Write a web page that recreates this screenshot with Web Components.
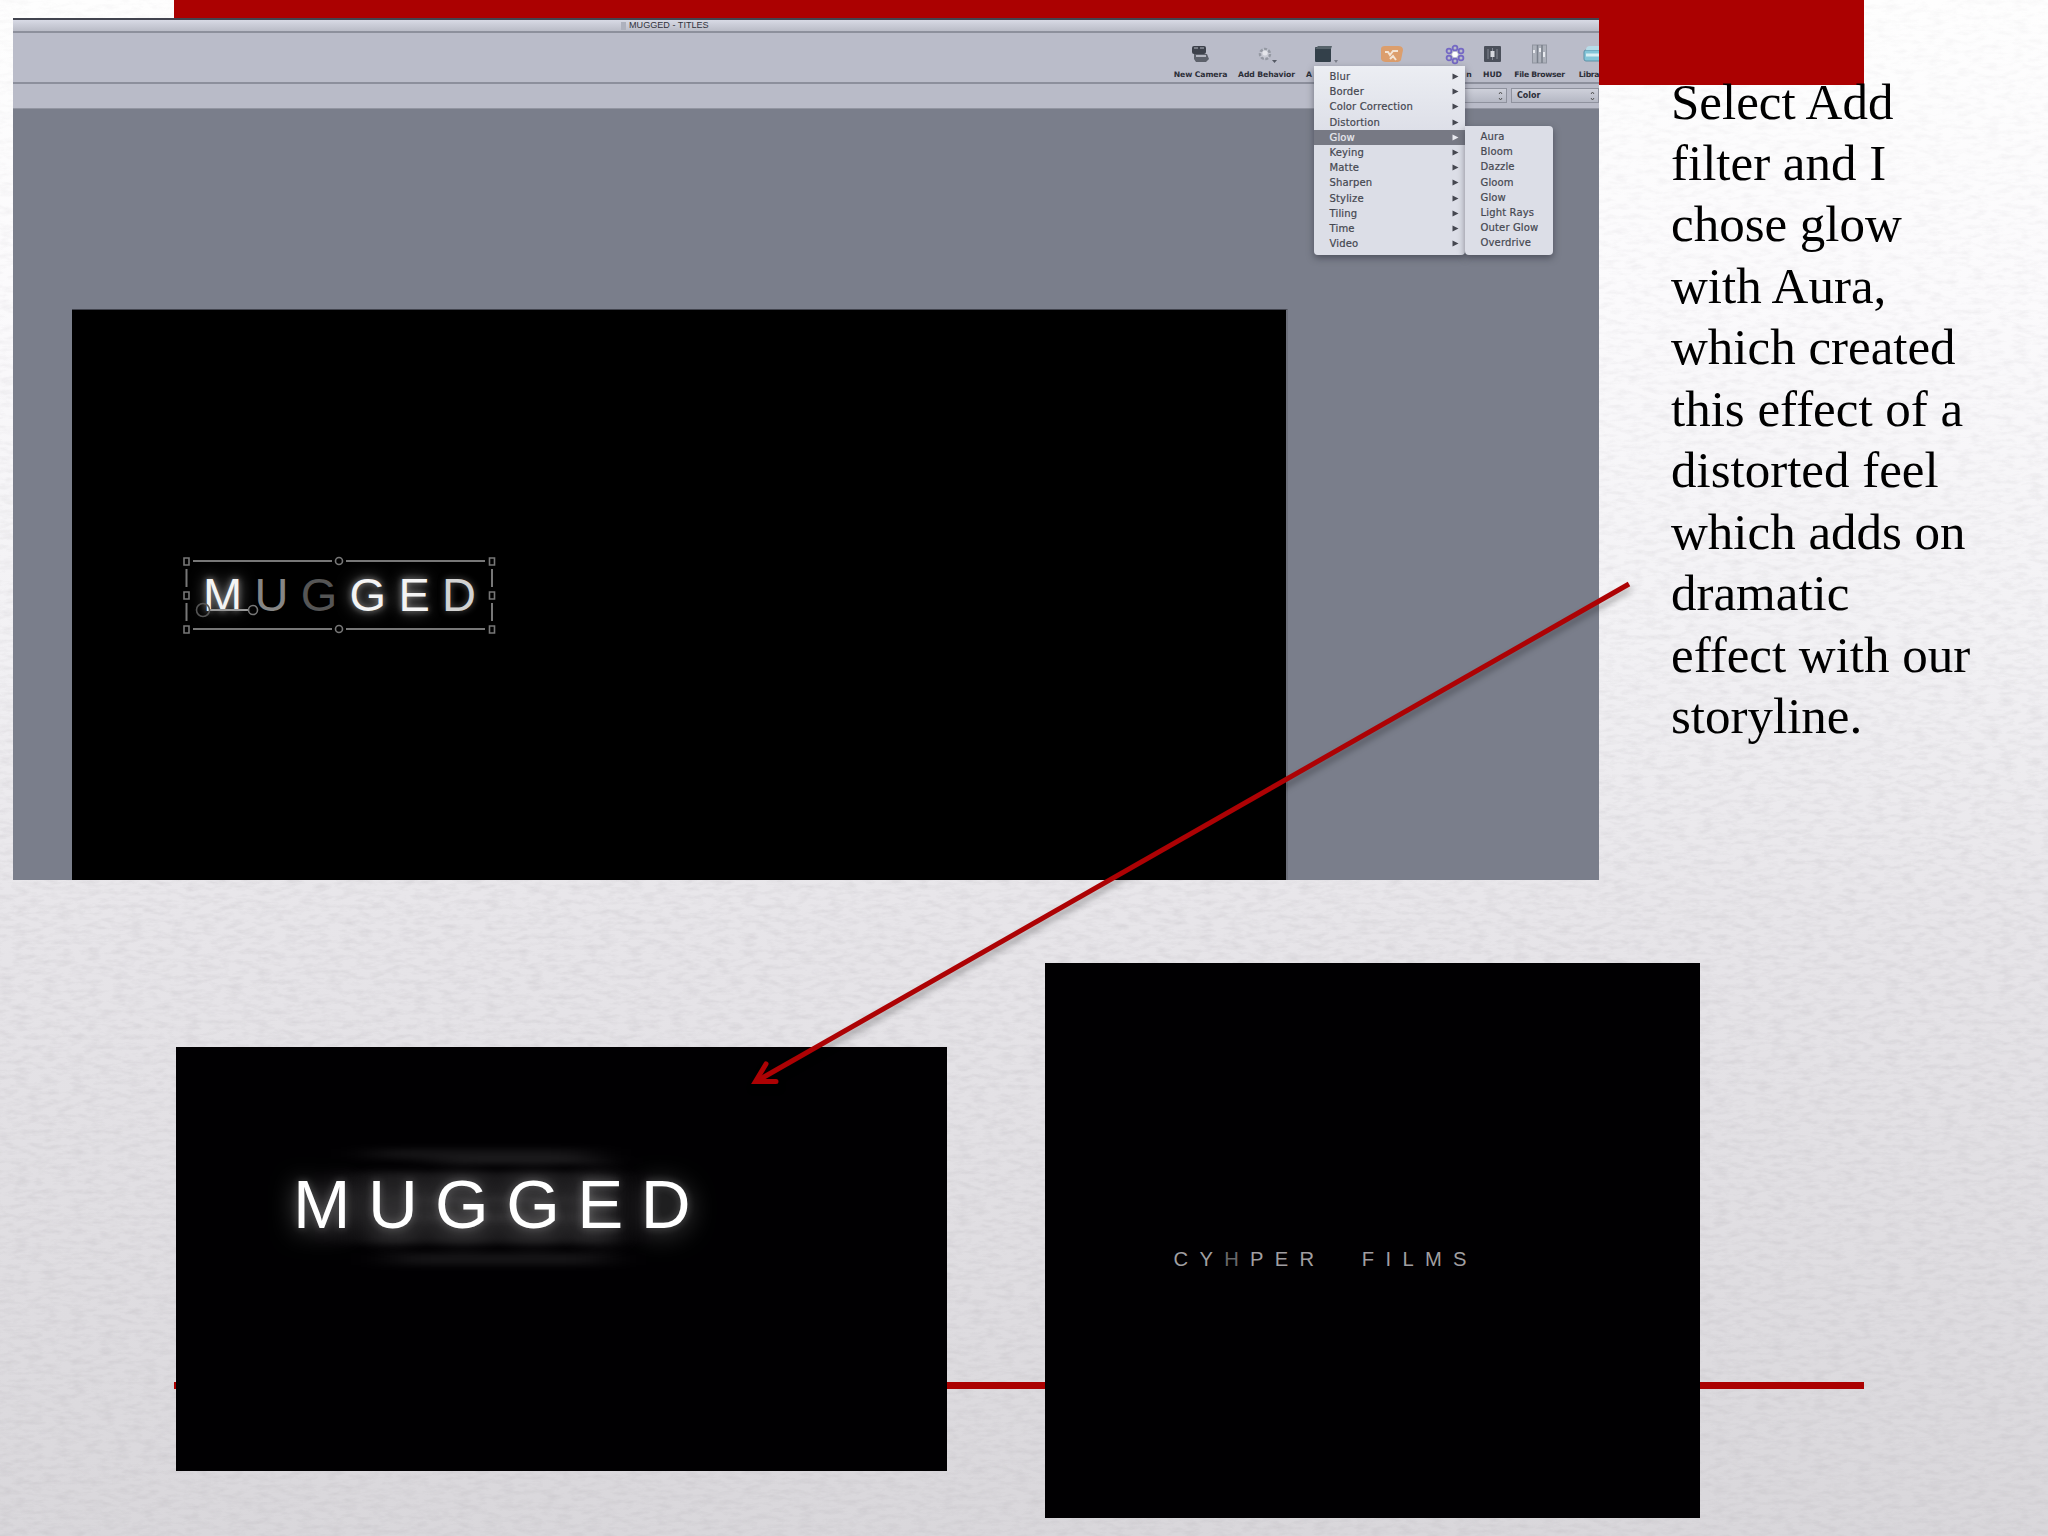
<!DOCTYPE html>
<html lang="en">
<head>
<meta charset="utf-8">
<title>MUGGED - TITLES</title>
<style>
    body {
        margin: 0;
        width: 2048px;
        height: 1536px;
        overflow: hidden;
    }
</style>
</head>
<body>
<title-slide>
    <motion-window slot="screen" heading="MUGGED - TITLES"></motion-window>
    <slide-caption slot="caption">Select Add filter and I chose glow with Aura, which created this effect of a distorted feel which adds on dramatic effect with our storyline.</slide-caption>
    <glow-still slot="stills">MUGGED</glow-still>
    <film-still slot="stills"></film-still>
    <slide-arrow slot="overlay"></slide-arrow>
</title-slide>

<script>
class TitleSlide extends HTMLElement {
    connectedCallback() {
        this.attachShadow({ mode: 'open' });
        this.shadowRoot.innerHTML = `
            <style>
                :host {
                    display: grid;
                    grid-template-columns: 1586px 303px;
                    grid-template-rows: 862px auto;
                    column-gap: 72px;
                    box-sizing: border-box;
                    position: relative;
                    width: 2048px;
                    height: 1536px;
                    padding: 18px 0 0 13px;
                    overflow: hidden;
                    background: linear-gradient(#fefefe 0, #fbfafc 300px, #f2f1f4 640px, #e7e5e9 920px, #dfdde1 1280px, #d9d7db 1536px);
                }
                .paper, .band, .rule {
                    position: absolute;
                }
                .paper {
                    inset: 0;
                    width: 100%;
                    height: 100%;
                }
                .band {
                    left: 174px;
                    top: 0;
                    width: 1690px;
                    height: 85px;
                    background: #ab0101;
                }
                .rule {
                    left: 174px;
                    top: 1382px;
                    width: 1690px;
                    height: 7px;
                    background: #ab0101;
                }
                .stills {
                    grid-column: 1 / -1;
                    display: flex;
                    align-items: flex-start;
                    gap: 98px;
                    padding: 83px 0 0 163px;
                    position: relative;
                }
            </style>
            <svg class="paper">
                <filter id="grain" x="0" y="0" width="100%" height="100%">
                    <feTurbulence type="fractalNoise" baseFrequency="0.07 0.2" numOctaves="3" seed="8"></feTurbulence>
                    <feColorMatrix values="0 0 0 0 0.42  0 0 0 0 0.4  0 0 0 0 0.43  0.9 0 0 0 -0.38"></feColorMatrix>
                </filter>
                <linearGradient id="fade" x1="0" y1="0" x2="0" y2="1">
                    <stop offset="0" stop-color="#666"></stop>
                    <stop offset="0.6" stop-color="#fff"></stop>
                </linearGradient>
                <mask id="m"><rect width="2048" height="1536" fill="url(#fade)"></rect></mask>
                <g mask="url(#m)"><rect width="2048" height="1536" filter="url(#grain)" opacity="0.5"></rect></g>
            </svg>
            <div class="band"></div>
            <div class="rule"></div>
            <slot name="screen"></slot>
            <slot name="caption"></slot>
            <div class="stills"><slot name="stills"></slot></div>
            <slot name="overlay"></slot>
        `;
    }
}
customElements.define('title-slide', TitleSlide);

class SlideCaption extends HTMLElement {
    connectedCallback() {
        this.attachShadow({ mode: 'open' });
        this.shadowRoot.innerHTML = `
            <style>
                :host {
                    display: block;
                    position: relative;
                    margin-top: 53.500px;
                    font: 51px/61.45px 'Liberation Serif', serif;
                    color: #000;
                }
            </style>
            <slot></slot>
        `;
    }
}
customElements.define('slide-caption', SlideCaption);

// The open menu covers most of two labels, so only their visible letters are set.
const TOOLS = [
    { label: 'New Camera', width: 65, icon: `
        <rect x="1" y="2" width="14" height="8" rx="2" fill="#3d414b"/>
        <path d="M3 4h4M9 4h4" stroke="#8a8e99" stroke-width="1.5"/>
        <path d="M3 10h13l2 5-3 3H5l-2-3z" fill="#5d616b"/><path d="M5 12h10" stroke="#b2b4bf" stroke-width="2"/>` },
    { label: 'Add Behavior', width: 67, icon: `
        <circle cx="8" cy="10" r="5" fill="#c9cbd4" stroke="#9599a3" stroke-width="2.5" stroke-dasharray="3 1.4"/>
        <circle cx="8" cy="9" r="2.5" fill="#e4e5ea"/><path d="M15 16h5l-2.500 3z" fill="#555964"/>` },
    { label: 'A', width: 48, shift: 'padding-right:30px', icon: `
        <rect x="1" y="3" width="16" height="15" rx="1" fill="#33404a"/>
        <path d="M1 5l3-3h14l-1 3z" fill="#57636b"/><path d="M20 16h4l-2 3z" fill="#7b7f8a"/>` },
    { label: '', width: 88, icon: `
        <path d="M-1 5q0-3 4-3h13q5 0 5 4l-2 10q-1 2-5 2H4q-4 0-5-3z" fill="#dc9e6c"/>
        <path d="M3 8h3l2 3 3-4h5M8 15l3-3 3 4" fill="none" stroke="#f3e4d4" stroke-width="2"/>` },
    { label: 'n', width: 38, shift: 'padding-left:28px', icon: `
        <g fill="none" stroke="#7468c4" stroke-width="1.800"><circle cx="10" cy="4" r="2.400"/><circle cx="16" cy="7" r="2.400"/><circle cx="16" cy="14" r="2.400"/><circle cx="10" cy="17" r="2.400"/><circle cx="4" cy="14" r="2.400"/><circle cx="4" cy="7" r="2.400"/></g>
        <circle cx="10" cy="10.500" r="2.800" fill="#fff"/>` },
    { label: 'HUD', width: 37, icon: `
        <rect x="1" y="2" width="17" height="16" rx="1" fill="#4b505b"/>
        <path d="M9.500 4v12M5 5v10M14 5v10" stroke="#858995"/><path d="M7.500 7h4v6h-4z" fill="#d6d8df"/>` },
    { label: 'File Browser', width: 57, icon: `
        <rect x="2.500" y="1" width="14" height="18" fill="#adb1bb" stroke="#8f949f"/>
        <path d="M7.500 1v18M12 1v18" stroke="#7a808b" stroke-width="1.500"/><path d="M4 6v3M10 4v4M14 8v5" stroke="#e8eaef" stroke-width="2"/>` },
    { label: 'Libra', width: 42, icon: `
        <rect x="5" y="6" width="23" height="11" rx="2" fill="#83c5d8" stroke="#5e91a7"/>
        <path d="M7 6q0-4 4-4h16v4" fill="#b7dce8"/><path d="M7 11h18" stroke="#d7eef3" stroke-width="3"/>` },
];

class MotionWindow extends HTMLElement {
    connectedCallback() {
        this.attachShadow({ mode: 'open' });
        const tools = TOOLS.map(t => `
            <div class="tool" style="width:${t.width}px">
                <svg width="20" height="20" viewBox="0 0 20 20">${t.icon}</svg>
                <span style="${t.shift || ''}">${t.label}</span>
            </div>`).join('');
        this.shadowRoot.innerHTML = `
            <style>
                :host {
                    display: flex;
                    flex-direction: column;
                    position: relative;
                    width: 1586px;
                    height: 862px;
                    overflow: hidden;
                    background: #7a7e8b;
                    font-family: 'DejaVu Sans', sans-serif;
                    color: #2c2e38;
                }
                .title {
                    box-sizing: border-box;
                    height: 15px;
                    padding-left: 608px;
                    display: flex;
                    align-items: center;
                    gap: 3px;
                    border-top: 2px solid #42444f;
                    border-bottom: 2px solid #8d909c;
                    background: linear-gradient(#d8dae5, #babcc7);
                    font: 9.100px/11px 'Liberation Sans', sans-serif;
                    color: #31333c;
                }
                .title i {
                    width: 5px;
                    height: 8px;
                    background: #aeb1bd;
                }
                .toolbar {
                    box-sizing: border-box;
                    height: 51px;
                    padding: 11px 0 0 1155px;
                    display: flex;
                    border-bottom: 2px solid #8c8f9c;
                    background: #babcc9;
                }
                .tool {
                    flex: none;
                    display: flex;
                    flex-direction: column;
                    align-items: center;
                    font: bold 7.700px/9px 'DejaVu Sans', sans-serif;
                    letter-spacing: -0.1px;
                    white-space: nowrap;
                }
                .tool:nth-child(n + 7) {
                    letter-spacing: -0.3px;
                }
                .tool svg {
                    overflow: visible;
                    margin-bottom: 6px;
                }
                .options {
                    box-sizing: border-box;
                    height: 25px;
                    padding: 4px 0 0 1420px;
                    display: flex;
                    gap: 4px;
                    border-bottom: 1px solid #9295a1;
                    background: #b9bbc8;
                }
                .select {
                    flex: none;
                    box-sizing: border-box;
                    display: flex;
                    justify-content: space-between;
                    align-items: center;
                    width: 74px;
                    height: 15px;
                    padding: 0 3px 0 5px;
                    border: 1px solid #8f929e;
                    background: linear-gradient(#ced0da, #b5b8c4);
                    font: bold 8px/12px 'DejaVu Sans', sans-serif;
                }
                .select + .select {
                    width: 88px;
                }
                .canvas {
                    flex: 1;
                    margin: 200px 311px 0 59px;
                    border-top: 1px solid #42444e;
                    border-right: 2px solid #6d707b;
                    background: #000;
                }
                filter-menu {
                    position: absolute;
                    left: 1300.500px;
                    top: 48px;
                }
            </style>
            <div class="title"><i></i>${this.getAttribute('heading')}</div>
            <div class="toolbar">${tools}</div>
            <div class="options">
                <div class="select"><span></span><svg width="5" height="10"><path d="M1 3l1.500-2L4 3M1 7l1.500 2L4 7" fill="none" stroke="#555"/></svg></div>
                <div class="select"><span>Color</span><svg width="5" height="10"><path d="M1 3l1.500-2L4 3M1 7l1.500 2L4 7" fill="none" stroke="#555"/></svg></div>
            </div>
            <div class="canvas"><selected-title></selected-title></div>
            <filter-menu></filter-menu>
        `;
    }
}
customElements.define('motion-window', MotionWindow);

class FilterMenu extends HTMLElement {
    connectedCallback() {
        this.attachShadow({ mode: 'open' });
        const groups = ['Blur', 'Border', 'Color Correction', 'Distortion', 'Glow', 'Keying', 'Matte', 'Sharpen', 'Stylize', 'Tiling', 'Time', 'Video'];
        const glows = ['Aura', 'Bloom', 'Dazzle', 'Gloom', 'Glow', 'Light Rays', 'Outer Glow', 'Overdrive'];
        const arrow = '<svg width="7" height="7"><path d="M0.500 0.500L6.500 3.500L0.500 6.500z" fill="currentColor"/></svg>';
        this.shadowRoot.innerHTML = `
            <style>
                :host {
                    display: flex;
                    align-items: flex-start;
                    font: 10px/15.2px 'DejaVu Sans', sans-serif;
                    letter-spacing: 0.15px;
                    color: #454750;
                }
                .menu {
                    box-sizing: border-box;
                    padding: 3px 0 4px;
                    background: #dcdee7;
                    box-shadow: 0 3px 7px rgba(35, 38, 50, 0.5);
                    border-radius: 0 0 4px 4px;
                }
                .groups {
                    width: 151px;
                    background: linear-gradient(#eceef3, #dcdee7 70px);
                }
                .glows {
                    width: 88px;
                    margin-top: 60px;
                    border-radius: 0 4px 4px 4px;
                }
                .item {
                    display: flex;
                    justify-content: space-between;
                    align-items: center;
                    height: 15.2px;
                    padding: 0 6px 0 16px;
                    -webkit-text-stroke: 0.2px currentColor;
                    white-space: nowrap;
                }
                .on {
                    background: #777984;
                    color: #e9eaf0;
                }
            </style>
            <div class="menu groups">${groups.map(g => `<div class="item${g === 'Glow' ? ' on' : ''}"><span>${g}</span>${arrow}</div>`).join('')}</div>
            <div class="menu glows">${glows.map(g => `<div class="item">${g}</div>`).join('')}</div>
        `;
    }
}
customElements.define('filter-menu', FilterMenu);

class SelectedTitle extends HTMLElement {
    connectedCallback() {
        this.attachShadow({ mode: 'open' });
        this.shadowRoot.innerHTML = `
            <style>
                :host {
                    display: block;
                    position: relative;
                    width: 318px;
                    height: 80px;
                    margin: 245px 0 0 108px;
                }
                .word {
                    display: block;
                    padding: 12px 0 0 23px;
                    font: 47px/55px 'Liberation Sans', sans-serif;
                    letter-spacing: 12.300px;
                    color: #d2d2d2;
                    white-space: nowrap;
                }
                .lit { color: #f4f4f4; text-shadow: 0 0 6px #888, 0 0 15px #888; }
                .u { color: #868686; }
                .dim { color: #555; }
                .d { text-shadow: 0 0 7px #555; }
                svg { position: absolute; inset: 0; }
            </style>
            <div class="word"><span class="lit">M</span><span class="u">U</span><span class="dim">G</span><span class="lit">G</span><span class="lit">E</span><span class="d">D</span></div>
            <svg width="318" height="80" fill="none" stroke="#777" stroke-width="2">
                <path d="M13 6H152M166 6H305M13 74H152M166 74H305M6.500 14V32M6.500 48V66M312 14V32M312 48V66"/>
                <path d="M30 55H68" stroke="#999"/>
                <g stroke-width="1.600">
                    <path d="M4 3h5v7H4zM309.500 3h5v7h-5zM4 71h5v7H4zM309.500 71h5v7h-5zM4 37h5v7H4zM309.500 37h5v7h-5z"/>
                    <circle cx="159" cy="6" r="3.500"/><circle cx="159" cy="74" r="3.500"/>
                    <circle cx="23" cy="55" r="6.500" stroke="#555"/><circle cx="73" cy="55" r="4.500"/>
                </g>
            </svg>
        `;
    }
}
customElements.define('selected-title', SelectedTitle);

class GlowStill extends HTMLElement {
    connectedCallback() {
        this.attachShadow({ mode: 'open' });
        this.shadowRoot.innerHTML = `
            <style>
                :host {
                    display: block;
                    position: relative;
                    width: 771px;
                    height: 424px;
                    margin-top: 84px;
                    background: #010002;
                }
                svg { position: absolute; inset: 0; }
                .word {
                    position: relative;
                    padding: 118px 0 0 117px;
                    font: 69px/80px 'Liberation Sans', sans-serif;
                    letter-spacing: 17.400px;
                    color: #fff;
                    text-shadow: 0 0 9px rgba(255, 255, 255, 0.25), 0 4px 26px rgba(255, 255, 255, 0.5);
                    white-space: nowrap;
                }
            </style>
            <svg width="771" height="424">
                <filter id="soft" x="-20%" y="-50%" width="140%" height="200%"><feGaussianBlur stdDeviation="22 3"/></filter>
                <g filter="url(#soft)" fill="#fff">
                    <path d="M195 102h220v10H195z" opacity="0.08"/>
                    <path d="M260 111h165v6H260z" opacity="0.1"/>
                    <path d="M180 125h255v72H180z" opacity="0.09"/>
                    <path d="M240 150h160v5H240zM240 168h160v6H240z" opacity="0.05"/>
                    <path d="M215 206h215v12H215z" opacity="0.08"/>
                </g>
            </svg>
            <div class="word"><slot></slot></div>
        `;
    }
}
customElements.define('glow-still', GlowStill);

class FilmStill extends HTMLElement {
    connectedCallback() {
        this.attachShadow({ mode: 'open' });
        this.shadowRoot.innerHTML = `
            <style>
                :host {
                    display: block;
                    box-sizing: border-box;
                    width: 655px;
                    height: 555px;
                    padding: 284px 0 0 128.500px;
                    background: #010002;
                    font: 20.200px/24px 'Liberation Sans', sans-serif;
                    letter-spacing: 11.300px;
                    word-spacing: 19.500px;
                    color: #a09fa1;
                    white-space: nowrap;
                }
                .dim { color: #68676a; }
            </style>
            CY<span class="dim">H</span>PER FILMS
        `;
    }
}
customElements.define('film-still', FilmStill);

class SlideArrow extends HTMLElement {
    connectedCallback() {
        this.attachShadow({ mode: 'open' });
        this.shadowRoot.innerHTML = `
            <style>
                :host {
                    display: block;
                    position: absolute;
                    left: 741px;
                    top: 570px;
                }
                svg {
                    display: block;
                    filter: drop-shadow(1px 5px 3px rgba(0, 0, 0, 0.3));
                }
            </style>
            <svg width="910" height="530" fill="none" stroke="#ad0204" stroke-width="5">
                <path d="M888 14L15 511.500"/>
                <path d="M25 494L14.500 511.500H35" stroke-linecap="round"/>
            </svg>
        `;
    }
}
customElements.define('slide-arrow', SlideArrow);
</script>
</body>
</html>
